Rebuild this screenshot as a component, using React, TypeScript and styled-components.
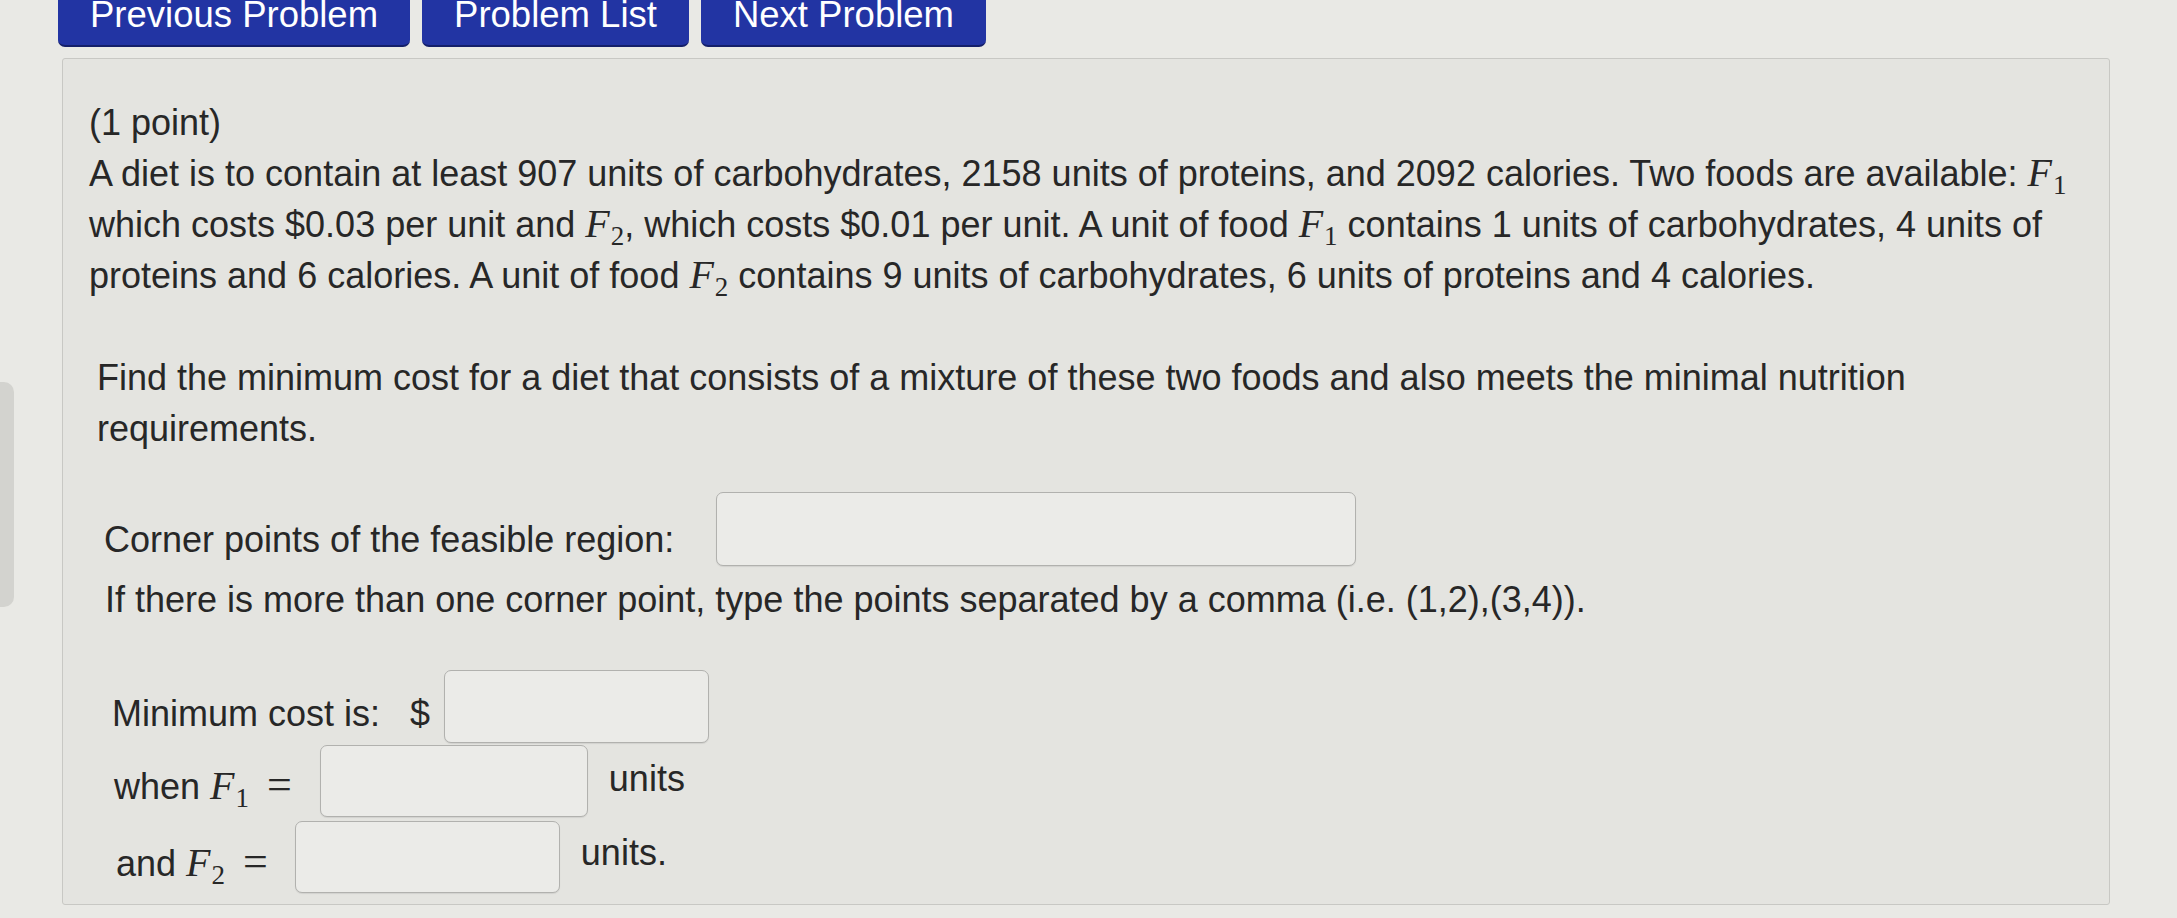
import React from 'react';
import styled, { createGlobalStyle } from 'styled-components';

const colors = {
  page: '#e9e9e5',
  panel: '#e4e4e0',
  panelBorder: '#c8c8c4',
  stub: '#d3d3cf',
  text: '#272727',
  button: '#2234a3',
  buttonEdge: '#141f6a',
  field: '#ebebe8',
  fieldBorder: '#b1b1ae',
};

const GlobalStyle = createGlobalStyle`
  html, body {
    margin: 0;
    padding: 0;
    background: ${colors.page};
    overflow: hidden;
  }
  body {
    font-family: "Liberation Sans", Arial, Helvetica, sans-serif;
    color: ${colors.text};
  }
`;

const Page = styled.div`
  display: flex;
  height: 918px;
`;

// edge of a side panel peeking in on the left
const SideStub = styled.div`
  flex-shrink: 0;
  width: 14px;
  height: 225px;
  margin-top: 382px;
  background: ${colors.stub};
  border-radius: 0 10px 10px 0;
`;

const Main = styled.main`
  flex: 1;
  padding-left: 44px;
`;

const Nav = styled.nav`
  display: flex;
  gap: 12px;
  margin-top: -20px;
`;

const NavButton = styled.button`
  box-sizing: border-box;
  height: 67px;
  padding: 5px 32px 0;
  border: none;
  border-bottom: 2px solid ${colors.buttonEdge};
  border-radius: 0 0 7px 7px;
  background: ${colors.button};
  color: #ffffff;
  font-family: "Liberation Sans", Arial, sans-serif;
  font-size: 36.5px;
  line-height: 36px;
  text-align: left;
  white-space: nowrap;
  cursor: pointer;
`;

const Panel = styled.section`
  box-sizing: border-box;
  width: 2048px;
  height: 847px;
  margin: 11px 0 0 4px;
  padding: 38px 0 0 26px;
  background: ${colors.panel};
  border: 1px solid ${colors.panelBorder};
  border-radius: 3px;
  font-size: 36px;
  line-height: 51px;
`;

const Para = styled.p<{ $indent?: number; $gap?: number }>`
  margin: ${({ $gap }) => $gap ?? 0}px 0 0 ${({ $indent }) => $indent ?? 0}px;
  white-space: nowrap;
`;

const Row = styled.div<{ $indent?: number; $gap?: number }>`
  display: flex;
  align-items: center;
  margin: ${({ $gap }) => $gap ?? 0}px 0 0 ${({ $indent }) => $indent ?? 0}px;
  white-space: nowrap;
`;

const Label = styled.span<{ $drop?: number; $space?: number }>`
  padding-top: ${({ $drop }) => $drop ?? 0}px;
  margin-right: ${({ $space }) => $space ?? 0}px;
`;

const Unit = styled.span<{ $lift?: number }>`
  margin-left: 21px;
  padding-bottom: ${({ $lift }) => $lift ?? 0}px;
`;

const Field = styled.input<{ $w: number; $h: number }>`
  box-sizing: border-box;
  flex-shrink: 0;
  width: ${({ $w }) => $w}px;
  height: ${({ $h }) => $h}px;
  padding: 0 12px;
  background: ${colors.field};
  border: 1.5px solid ${colors.fieldBorder};
  border-radius: 7px;
  box-shadow: 0 1px 1px rgba(0, 0, 0, 0.08);
  font-size: 30px;
  outline: none;
`;

const MathVar = styled.span`
  font-family: "Liberation Serif", "Times New Roman", serif;
  font-style: italic;
  font-size: 40px;
  line-height: 0;
`;

const Sub = styled.sub`
  font-style: normal;
  font-size: 27px;
  vertical-align: -8px;
  line-height: 0;
  margin-left: 1px;
`;

const Equals = styled.span`
  font-family: "Liberation Serif", "Times New Roman", serif;
  font-size: 44px;
  line-height: 0;
  margin-left: 18px;
`;

function F({ n }: { n: number }) {
  return (
    <MathVar>
      F<Sub>{n}</Sub>
    </MathVar>
  );
}

export default function App() {
  return (
    <>
      <GlobalStyle />
      <Page>
        <SideStub />
        <Main>
          <Nav>
            <NavButton>Previous Problem</NavButton>
            <NavButton>Problem List</NavButton>
            <NavButton>Next Problem</NavButton>
          </Nav>

          <Panel>
            <Para>
              (1 point)
              <br />
              A diet is to contain at least 907 units of carbohydrates, 2158 units of proteins, and 2092 calories. Two
              foods are available: <F n={1} />
              <br />
              which costs $0.03 per unit and <F n={2} />, which costs $0.01 per unit. A unit of food <F n={1} /> contains
              1 units of carbohydrates, 4 units of
              <br />
              proteins and 6 calories. A unit of food <F n={2} /> contains 9 units of carbohydrates, 6 units of proteins
              and 4 calories.
            </Para>

            <Para $indent={8} $gap={51}>
              Find the minimum cost for a diet that consists of a mixture of these two foods and also meets the minimal
              nutrition
              <br />
              requirements.
            </Para>

            <Row $indent={15} $gap={38}>
              <Label $drop={20} $space={42}>
                Corner points of the feasible region:
              </Label>
              <Field $w={640} $h={74} readOnly />
            </Row>

            <Para $indent={16} $gap={8}>
              If there is more than one corner point, type the points separated by a comma (i.e. (1,2),(3,4)).
            </Para>

            <Row $indent={23} $gap={45}>
              <Label $drop={13} $space={30}>
                Minimum cost is:
              </Label>
              <Label $drop={13} $space={14}>
                $
              </Label>
              <Field $w={265} $h={73} readOnly />
            </Row>

            <Row $indent={25} $gap={2}>
              <Label $drop={10} $space={28}>
                when <F n={1} />
                <Equals>=</Equals>
              </Label>
              <Field $w={268} $h={72} readOnly />
              <Unit $lift={6}>units</Unit>
            </Row>

            <Row $indent={27} $gap={4}>
              <Label $drop={12} $space={27}>
                and <F n={2} />
                <Equals>=</Equals>
              </Label>
              <Field $w={265} $h={72} readOnly />
              <Unit $lift={10}>units.</Unit>
            </Row>
          </Panel>
        </Main>
      </Page>
    </>
  );
}
